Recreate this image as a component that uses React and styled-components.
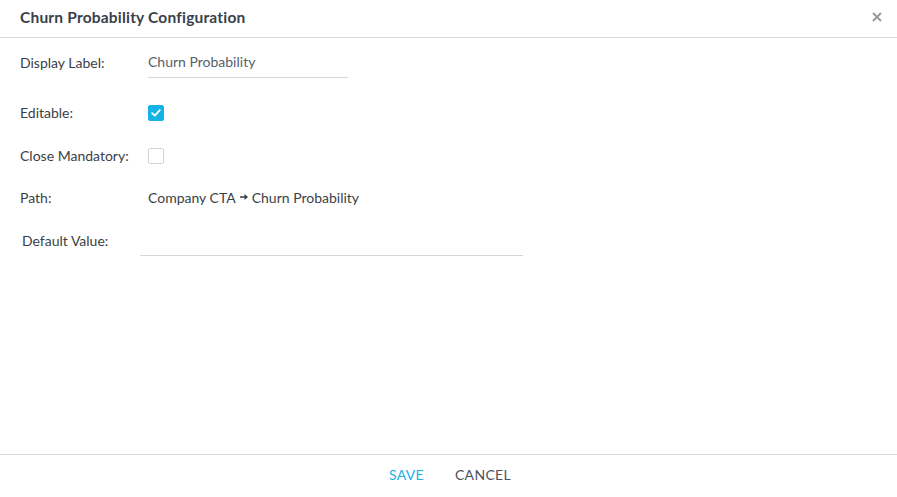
import React, { useState } from 'react';
import styled, { createGlobalStyle } from 'styled-components';

const GlobalStyle = createGlobalStyle`
    html, body, #root {
        margin: 0;
        height: 100%;
    }
    body {
        font-family: Lato, "Open Sans", sans-serif;
        background: #ffffff;
        color: #333a44;
    }
`;

const Modal = styled.div`
    display: flex;
    flex-direction: column;
    width: 897px;
    height: 497px;
    background: #fff;
`;

const Header = styled.div`
    display: flex;
    align-items: center;
    justify-content: space-between;
    height: 33px;
    padding: 0 12px 4px 20px;
    border-bottom: 1px solid #d9dcdf;
`;

const Title = styled.h1`
    margin: 0;
    font-size: 15.5px;
    font-weight: 700;
    color: #38414c;
    letter-spacing: 0.2px;
`;

const CloseButton = styled.button`
    display: flex;
    align-items: center;
    justify-content: center;
    width: 16px;
    height: 16px;
    padding: 0;
    border: none;
    background: none;
    cursor: pointer;
`;

const Body = styled.div`
    flex: 1;
    display: flex;
    flex-direction: column;
    padding: 9px 20px 0;
`;

const Row = styled.div`
    display: flex;
    align-items: center;
    margin-top: ${p => p.$top || 0}px;
    padding-left: ${p => p.$indent || 0}px;
`;

const Label = styled.label`
    width: ${p => p.$width || 128}px;
    flex-shrink: 0;
    font-size: 14px;
    color: #3a3f46;
`;

const TextInput = styled.input`
    box-sizing: border-box;
    width: ${p => p.$width}px;
    height: 31px;
    padding: 0 0 1px;
    border: none;
    border-bottom: 1px solid #d4d7da;
    outline: none;
    font-family: inherit;
    font-size: 14px;
    color: #56606b;
    background: transparent;
`;

const Check = styled.span`
    box-sizing: border-box;
    display: flex;
    align-items: center;
    justify-content: center;
    width: 16px;
    height: 16px;
    border-radius: 2px;
    border: 1px solid ${p => (p.$checked ? '#15b2e6' : '#cfd3d6')};
    background: ${p => (p.$checked ? '#15b2e6' : '#fff')};
    cursor: pointer;
`;

const PathText = styled.span`
    display: flex;
    align-items: center;
    gap: 4px;
    height: 20px;
    font-size: 14px;
    color: #3a3f46;
`;

const Footer = styled.div`
    display: flex;
    align-items: center;
    justify-content: center;
    gap: 31px;
    height: 38px;
    padding: 0 0 4px 3px;
    border-top: 1px solid #d9dcdf;
`;

const FooterButton = styled.button`
    padding: 0;
    border: none;
    background: none;
    font-family: inherit;
    font-size: 14px;
    letter-spacing: 0.3px;
    color: ${p => (p.$primary ? '#1cb0e3' : '#4a525c')};
    cursor: pointer;
`;

const Checkbox = ({ checked, onChange }) => (
    <Check $checked={checked} onClick={() => onChange(!checked)}>
        {checked && (
            <svg width="10" height="8" viewBox="0 0 10 8">
                <path d="M1.2 4.2 L3.8 6.6 L8.8 1.2" fill="none" stroke="#fff" strokeWidth="1.8" strokeLinecap="round" strokeLinejoin="round" />
            </svg>
        )}
    </Check>
);

const App = () => {
    const [label, setLabel] = useState('Churn Probability');
    const [editable, setEditable] = useState(true);
    const [mandatory, setMandatory] = useState(false);
    const [defaultValue, setDefaultValue] = useState('');

    return (
        <>
            <GlobalStyle />
            <Modal>
                <Header>
                    <Title>Churn Probability Configuration</Title>
                    <CloseButton aria-label="Close">
                        <svg width="10" height="10" viewBox="0 0 10 10">
                            <path d="M1 1 L9 9 M9 1 L1 9" stroke="#9a9a9a" strokeWidth="2" />
                        </svg>
                    </CloseButton>
                </Header>
                <Body>
                    <Row>
                        <Label>Display Label:</Label>
                        <TextInput $width={200} value={label} onChange={e => setLabel(e.target.value)} />
                    </Row>
                    <Row $top={26}>
                        <Label>Editable:</Label>
                        <Checkbox checked={editable} onChange={setEditable} />
                    </Row>
                    <Row $top={26}>
                        <Label>Close Mandatory:</Label>
                        <Checkbox checked={mandatory} onChange={setMandatory} />
                    </Row>
                    <Row $top={23}>
                        <Label>Path:</Label>
                        <PathText>
                            Company CTA
                            <svg width="8" height="6" viewBox="0 0 8 6">
                                <path d="M0 2.3 H4.5 V0 L8 3 L4.5 6 V3.7 H0 Z" fill="#3a3f46" />
                            </svg>
                            Churn Probability
                        </PathText>
                    </Row>
                    <Row $top={18} $indent={2}>
                        <Label $width={118}>Default Value:</Label>
                        <TextInput $width={383} value={defaultValue} onChange={e => setDefaultValue(e.target.value)} />
                    </Row>
                </Body>
                <Footer>
                    <FooterButton $primary>SAVE</FooterButton>
                    <FooterButton>CANCEL</FooterButton>
                </Footer>
            </Modal>
        </>
    );
};

export default App;
